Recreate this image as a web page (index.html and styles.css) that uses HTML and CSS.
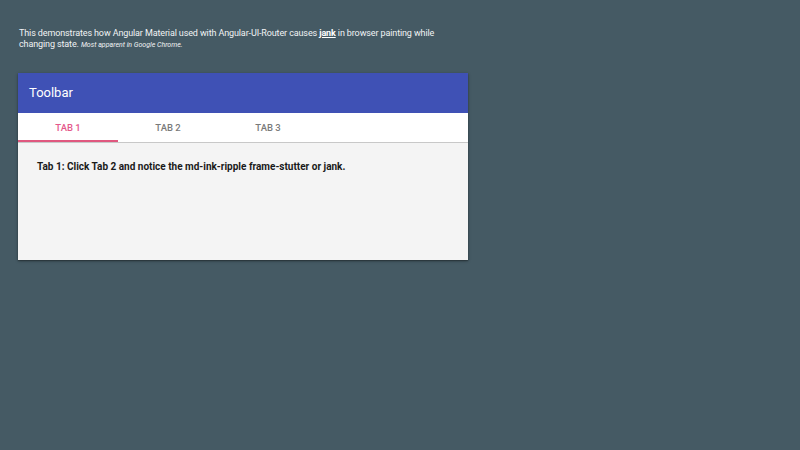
FILE: index.html
```html
<!DOCTYPE html>
<html>
<head>
<meta charset="utf-8">
<link rel="stylesheet" href="styles.css">
</head>
<body>
<div class="page">
  <p class="intro">This demonstrates how Angular Material used with Angular-UI-Router causes <a class="jank">jank</a> in browser painting while changing state. <small class="note">Most apparent in Google Chrome.</small></p>
  <div class="card">
    <div class="toolbar"><span class="title">Toolbar</span></div>
    <div class="tabs">
      <div class="tab active">TAB 1</div>
      <div class="tab">TAB 2</div>
      <div class="tab">TAB 3</div>
    </div>
    <div class="content">
      <h4 class="msg">Tab 1: Click Tab 2 and notice the md-ink-ripple frame-stutter or jank.</h4>
    </div>
  </div>
</div>
</body>
</html>
```
FILE: styles.css
```css
html, body {
  margin: 0;
  padding: 0;
  background: #455a64;
  width: 800px;
  height: 450px;
  overflow: hidden;
  font-family: Roboto, "Liberation Sans", sans-serif;
}
.page {
  padding: 28px 18px 0 19px;
}
.intro {
  margin: 0;
  width: 425px;
  color: #f1f3f4;
  font-size: 9px;
  letter-spacing: -0.12px;
  line-height: 10.5px;
}
.jank {
  color: #ffffff;
  font-weight: bold;
  text-decoration: underline;
}
.note {
  font-size: 7px;
  line-height: 7px;
  font-style: italic;
  letter-spacing: 0;
}
.card {
  margin-top: 24px;
  margin-left: -1px;
  width: 450px;
  background: #f4f4f4;
  box-shadow: 0 1px 3px rgba(0,0,0,0.35), 0 1px 1px rgba(0,0,0,0.2);
}
.toolbar {
  height: 40px;
  background: #3f51b5;
  display: flex;
  align-items: center;
  padding-left: 11px;
  padding-bottom: 1px;
  box-sizing: border-box;
}
.title {
  color: #fff;
  font-size: 13px;
}
.tabs {
  display: flex;
  height: 29px;
  background: #fff;
  border-bottom: 1px solid #c8c8c8;
}
.tab {
  width: 100px;
  display: flex;
  align-items: center;
  justify-content: center;
  font-size: 9.5px;
  font-weight: 500;
  color: #7a7a7a;
  box-sizing: border-box;
}
.tab.active {
  color: #e5598b;
  border-bottom: 2px solid #e0587f;
  padding-top: 2px;
}
.content {
  height: 117px;
  padding: 18px 19px 0;
  box-sizing: border-box;
}
.msg {
  margin: 0;
  font-size: 10px;
  font-weight: bold;
  color: #1a1a1a;
}
```
